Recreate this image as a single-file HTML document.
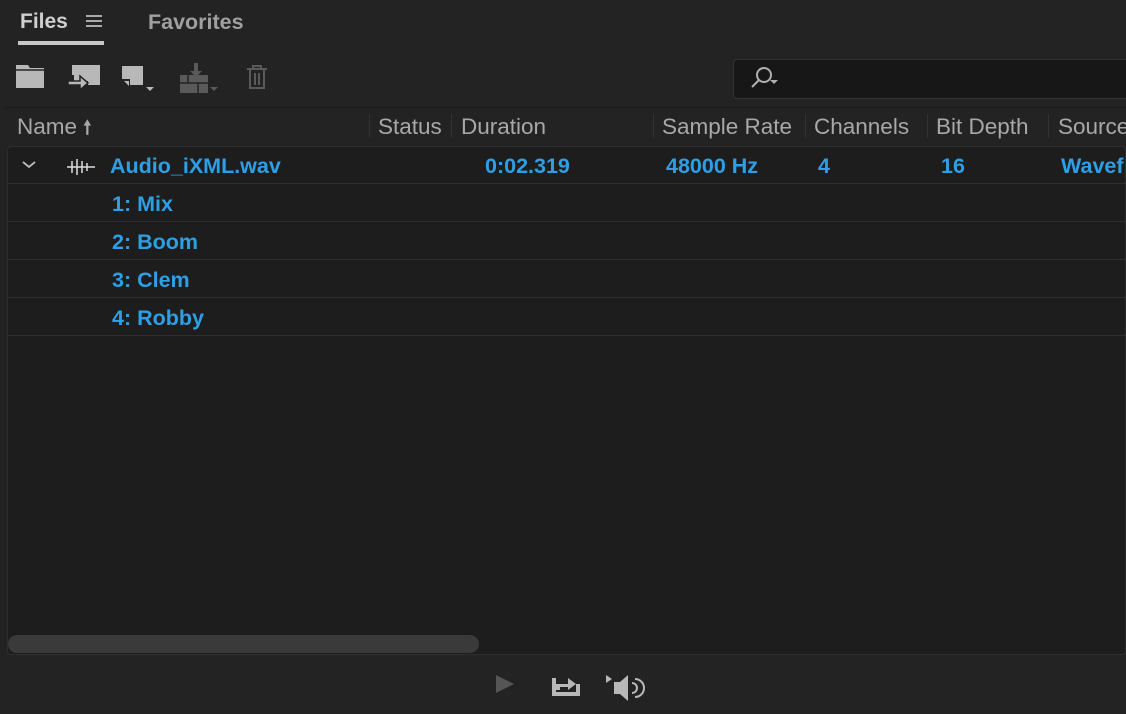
<!DOCTYPE html>
<html><head><style>
body{margin:0;width:1126px;height:714px;background:#232323;font-family:"Liberation Sans",sans-serif;overflow:hidden;position:relative}
.a{position:absolute;white-space:nowrap}
.t{font-size:22.5px;color:#a8a8a8}
.b{color:#2d9fe6;font-size:21.5px;font-weight:bold}
.sep{position:absolute;top:114px;width:1px;height:24px;background:#333}
.row{position:absolute;left:8px;right:0;height:1px;background:#2f2f2f}
</style></head><body>
<div class="a" style="left:20px;top:10px;font-size:21px;color:#d0d0d0;font-weight:bold">Files</div>
<div class="a" style="left:86px;top:15px;width:16px;height:2px;background:#aaa;box-shadow:0 5px 0 #aaa,0 10px 0 #aaa"></div>
<div class="a" style="left:18px;top:41px;width:86px;height:4px;background:#c8c8c8"></div>
<div class="a" style="left:148px;top:10px;font-size:21.5px;color:#a0a0a0;font-weight:bold">Favorites</div>
<svg class="a" style="left:0;top:55px" width="280" height="45">
<path d="M16 10h12l2 3h14v20H16z" fill="#b8b8b8"/><path d="M16 15h28" stroke="#232323" stroke-width="1.5"/>
<path d="M72 10h28v20H88v-4H74v-6h-2z" fill="#b8b8b8"/><path d="M68 26h12v-5l8 7-8 7v-5H68z" fill="#b8b8b8" stroke="#232323" stroke-width="1.5"/>
<path d="M122 11h21v19h-13v-6h-8z" fill="#b8b8b8"/><path d="M124 26h5v5z" fill="#b8b8b8"/><path d="M146 32h8l-4 4z" fill="#b8b8b8"/>
<g fill="#5a5a5a"><path d="M180 20h28v18h-28z"/><path d="M194 8h4v8h4l-6 6-6-6h4z"/><path d="M210 32h8l-4 4z"/></g>
<path d="M180 28h28M188 20v8M198 28v10" stroke="#232323" stroke-width="1.5"/>
<g stroke="#5a5a5a" stroke-width="2" fill="none"><path d="M247 14h20M253 14v-3h8v3M250 15v18h14V15M255 18v12M259 18v12"/></g>
</svg>
<div class="a" style="left:733px;top:59px;width:400px;height:38px;background:#171717;border:1px solid #333;border-radius:4px"></div>
<svg class="a" style="left:744px;top:64px" width="40" height="26"><circle cx="20" cy="11" r="7" fill="none" stroke="#b0b0b0" stroke-width="2"/><path d="M15 16l-7 7" stroke="#b0b0b0" stroke-width="2"/><path d="M26 16h8l-4 4z" fill="#b0b0b0"/></svg>
<div class="a" style="left:6px;top:107px;right:0;height:1px;background:#1a1a1a"></div>
<div class="a t" style="left:17px;top:114px">Name <b style="font-size:19px">🠕</b></div>
<div class="sep" style="left:369px"></div><div class="a t" style="left:378px;top:114px">Status</div>
<div class="sep" style="left:451px"></div><div class="a t" style="left:461px;top:114px">Duration</div>
<div class="sep" style="left:653px"></div><div class="a t" style="left:662px;top:114px">Sample Rate</div>
<div class="sep" style="left:805px"></div><div class="a t" style="left:814px;top:114px">Channels</div>
<div class="sep" style="left:927px"></div><div class="a t" style="left:936px;top:114px">Bit Depth</div>
<div class="sep" style="left:1048px"></div><div class="a t" style="left:1058px;top:114px">Source</div>
<div class="a" style="left:7px;top:146px;right:0;height:507px;background:#1d1d1d;border:1px solid #2e2e2e;border-radius:4px"></div>
<div class="row" style="top:183px"></div><div class="row" style="top:221px"></div><div class="row" style="top:259px"></div><div class="row" style="top:297px"></div><div class="row" style="top:335px"></div>
<svg class="a" style="left:20px;top:157px" width="80" height="20"><path d="M3 5l6 5 6-5" fill="none" stroke="#bbb" stroke-width="1.8"/><path d="M47 10h28M52 4v12M57 2v16M62 4v12M67 6v8" stroke="#ddd" stroke-width="1.5"/></svg>
<div class="a b" style="left:110px;top:154px">Audio_iXML.wav</div>
<div class="a b" style="left:485px;top:154px">0:02.319</div>
<div class="a b" style="left:666px;top:154px">48000 Hz</div>
<div class="a b" style="left:818px;top:154px">4</div>
<div class="a b" style="left:941px;top:154px">16</div>
<div class="a b" style="left:1061px;top:154px">Wavef</div>
<div class="a b" style="left:112px;top:192px">1: Mix</div>
<div class="a b" style="left:112px;top:230px">2: Boom</div>
<div class="a b" style="left:112px;top:268px">3: Clem</div>
<div class="a b" style="left:112px;top:306px">4: Robby</div>
<div class="a" style="left:8px;top:635px;width:471px;height:18px;background:#3a3a3a;border-radius:9px"></div>
<svg class="a" style="left:490px;top:670px" width="170" height="34"><path d="M6 5l18 9-18 9z" fill="#555"/><path d="M62 8v18h28V14h-4v8H66V8z" fill="#b8b8b8"/><path d="M66 14h12V8l8 6-8 6v-3H70v3h-4z" fill="#b8b8b8"/><path d="M116 5l6 4-6 4z" fill="#b8b8b8"/><path d="M124 12h6l8-7v26l-8-7h-6z" fill="#b8b8b8"/><path d="M142 13a5 5 0 010 10M145 9a9 9 0 010 18" fill="none" stroke="#b8b8b8" stroke-width="2"/></svg>
</body></html>
